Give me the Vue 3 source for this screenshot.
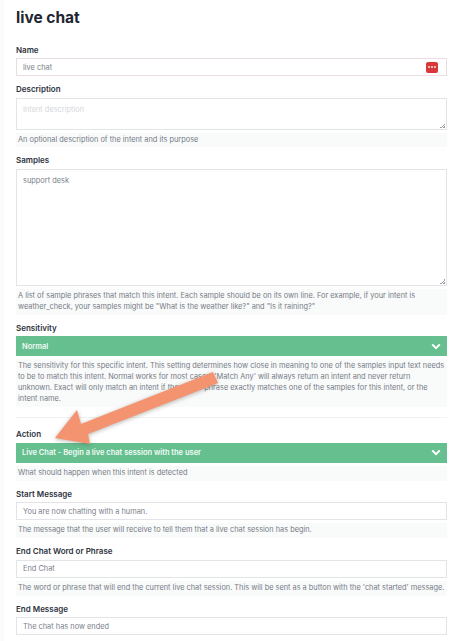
<script setup>
const help1 = 'A list of sample phrases that match this intent. Each sample should be on its own line. For example, if your intent is weather_check, your samples might be "What is the weather like?" and "Is it raining?"'
const help2 = "The sensitivity for this specific intent. This setting determines how close in meaning to one of the samples input text needs to be to match this intent. Normal works for most cases. 'Match Any' will always return an intent and never return unknown. Exact will only match an intent if the user's phrase exactly matches one of the samples for this intent, or the intent name."
</script>

<template>
  <div class="page">
    <h1 class="title">live chat</h1>

    <section class="field">
      <label>Name</label>
      <div class="input with-icon">
        <span>live chat</span>
        <span class="badge"><i></i><i></i><i></i></span>
      </div>
    </section>

    <section class="field">
      <label>Description</label>
      <div class="area short"><span class="placeholder">Intent description</span><span class="grip"></span></div>
      <p class="help">An optional description of the intent and its purpose</p>
    </section>

    <section class="field">
      <label>Samples</label>
      <div class="area tall"><span>support desk</span><span class="grip"></span></div>
      <p class="help">{{ help1 }}</p>
    </section>

    <section class="field">
      <label>Sensitivity</label>
      <div class="select">
        <span>Normal</span>
        <svg width="10" height="7" viewBox="0 0 10 7"><path d="M1.2 1.4 5 5.2l3.8-3.8" fill="none" stroke="#fff" stroke-width="2"/></svg>
      </div>
      <p class="help">{{ help2 }}</p>
    </section>

    <hr class="rule" />

    <section class="field">
      <label>Action</label>
      <div class="select">
        <span>Live Chat - Begin a live chat session with the user</span>
        <svg width="10" height="7" viewBox="0 0 10 7"><path d="M1.2 1.4 5 5.2l3.8-3.8" fill="none" stroke="#fff" stroke-width="2"/></svg>
      </div>
      <p class="help">What should happen when this intent is detected</p>
    </section>

    <section class="field">
      <label>Start Message</label>
      <div class="input"><span>You are now chatting with a human.</span></div>
      <p class="help">The message that the user will receive to tell them that a live chat session has begin.</p>
    </section>

    <section class="field">
      <label>End Chat Word or Phrase</label>
      <div class="input"><span>End Chat</span></div>
      <p class="help nowrap">The word or phrase that will end the current live chat session. This will be sent as a button with the 'chat started' message.</p>
    </section>

    <section class="field">
      <label>End Message</label>
      <div class="input"><span>The chat has now ended</span></div>
    </section>

    <svg class="arrow" width="474" height="641" viewBox="0 0 474 641">
      <path d="M213 372 L218 383 L88 434 L90 444 L55 438 L77 410 L81 424 Z" fill="#f4936f" />
    </svg>
  </div>
</template>

<style scoped>
.page {
  position: relative;
  box-sizing: border-box;
  width: 474px;
  height: 641px;
  overflow: hidden;
  padding: 8px 27px 0 12px;
  border-left: 4px solid #fbfbfb;
  background: #fff;
  font-family: Inter, "Liberation Sans", sans-serif;
  color: #1f2933;
}
.title {
  margin: 0 0 17.5px;
  font-size: 15.5px;
  line-height: 19px;
  font-weight: 700;
  color: #22262e;
}
.field { display: flex; flex-direction: column; margin-bottom: 8px; }
label {
  display: block;
  font-size: 8px;
  line-height: 10px;
  font-weight: 600;
  color: #2d3340;
  margin-bottom: 3.5px;
}
.input, .area {
  box-sizing: border-box;
  border: 1px solid #e2e4e8;
  background: #fff;
  font-size: 7.4px;
  color: #7a808a;
  padding: 0 6px;
}
.input {
  height: 18px;
  display: flex;
  align-items: center;
  justify-content: space-between;
}
.with-icon { border-color: #eadfe0; padding-right: 8px; }
.badge {
  width: 12px;
  height: 11px;
  border-radius: 2px;
  background: #d9383a;
  display: flex;
  align-items: center;
  justify-content: center;
  gap: 1px;
}
.badge i { width: 2px; height: 2px; border-radius: 50%; background: #fbe3e3; }
.area { position: relative; padding-top: 5px; line-height: 11px; }
.short { height: 32px; }
.tall { height: 117px; }
.placeholder { color: #d4d7db; }
.grip {
  position: absolute;
  right: 1px;
  bottom: 1px;
  width: 5px;
  height: 5px;
  background: linear-gradient(135deg, transparent 50%, #9aa0a6 50%, #9aa0a6 62%, transparent 62%, transparent 78%, #9aa0a6 78%);
}
.help {
  margin: 3px 0 0;
  padding: 2px 2px;
  background: #f9fafa;
  font-size: 7.37px;
  line-height: 10.9px;
  color: #757b86;
}
.nowrap { white-space: nowrap; }
.select {
  box-sizing: border-box;
  height: 20px;
  background: #65bf8f;
  color: #f3fbf6;
  font-size: 7.5px;
  font-weight: 600;
  padding: 0 6px;
  display: flex;
  align-items: center;
  justify-content: space-between;
}
.rule { border: 0; border-top: 1px solid #f1f2f3; margin: 10px 0 11.5px; }
.arrow { position: absolute; left: -4px; top: 0; pointer-events: none; filter: drop-shadow(0 1px 2px rgba(60, 40, 30, .35)); }
</style>
